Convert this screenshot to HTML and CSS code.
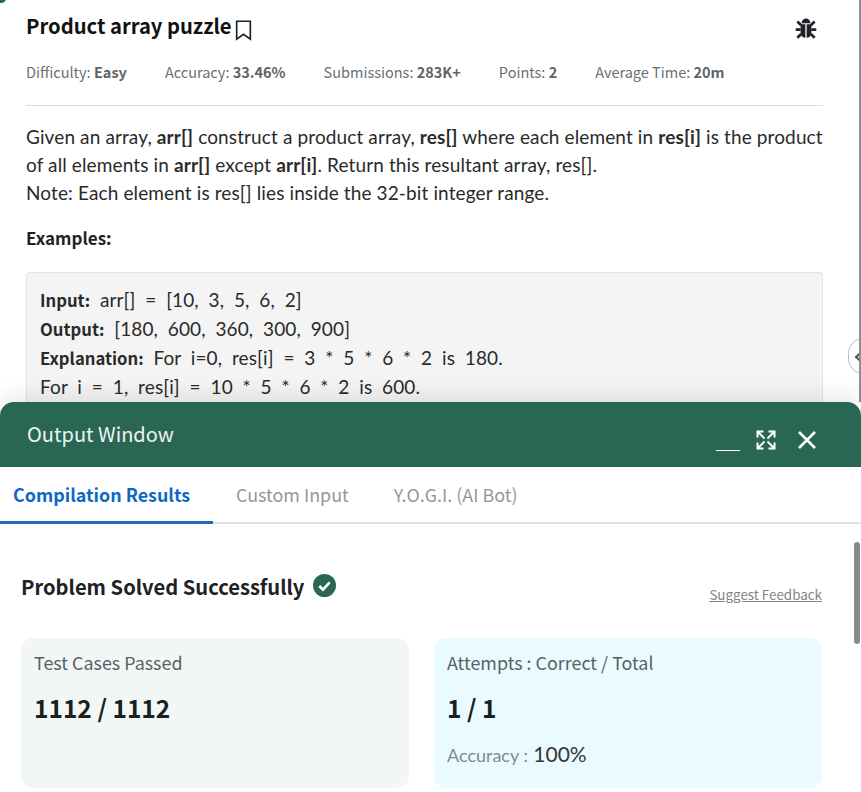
FILE: index.html
```html
<!DOCTYPE html>
<html lang="en">
<head>
<meta charset="utf-8">
<title>Product array puzzle</title>
<link rel="stylesheet" href="styles.css">
</head>
<body>
<main class="problem">
  <header class="title-row">
    <div class="title-group">
      <h1 class="title">Product array puzzle</h1>
      <svg class="bookmark" viewBox="0 0 16 20" aria-hidden="true"><path d="M1.500 1.200h13v17l-6.500-4.600-6.500 4.600z"/></svg>
    </div>
    <svg class="bug" viewBox="0 0 24 24" aria-hidden="true"><path d="M7.800 7.500c.4-2.800 2-4.300 4.200-4.300s3.800 1.500 4.200 4.300z"/><path d="M7 8.500h4.400V21C8.800 20.800 7 19 7 16.500zM12.600 8.500H17v8c0 2.500-1.800 4.300-4.400 4.500z"/><path class="bug-legs" d="M7.500 9.500 4 6M16.500 9.500 20 6M7 13.500H2.500M17 13.500h4.500M7.500 17.500 4 21M16.500 17.500 20 21"/></svg>
  </header>
  <div class="stats">
    <span>Difficulty: <b>Easy</b></span>
    <span>Accuracy: <b>33.46%</b></span>
    <span>Submissions: <b>283K+</b></span>
    <span>Points: <b>2</b></span>
    <span>Average Time: <b>20m</b></span>
  </div>
  <hr class="rule">
  <p class="statement">Given an array, <b>arr[]</b> construct a product array, <b>res[]</b> where each element in <b>res[i]</b> is the product of all elements in <b>arr[]</b> except <b>arr[i]</b>. Return this resultant array, res[].<br>Note: Each element is res[] lies inside the 32-bit integer range.</p>
  <h2 class="examples">Examples:</h2>
  <pre class="example"><b>Input:</b> arr[] = [10, 3, 5, 6, 2]
<b>Output:</b> [180, 600, 360, 300, 900]
<b>Explanation:</b> For i=0, res[i] = 3 * 5 * 6 * 2 is 180.
For i = 1, res[i] = 10 * 5 * 6 * 2 is 600.
For i = 2, res[i] = 10 * 3 * 6 * 2 is 360.</pre>
</main>
<div class="handle"><span class="handle-arrow"></span></div>
<div class="edge-line"></div>
<div class="corner-hint"></div>
<section class="output">
  <div class="output-bar">
    <span class="output-title">Output Window</span>
    <div class="output-actions">
      <span class="minimize"></span>
      <svg class="expand" viewBox="0 0 20 20" aria-hidden="true"><path d="M1.500 7.500v-6h6M1.500 1.500l7 7M18.500 7.500v-6h-6M18.500 1.500l-7 7M1.500 12.500v6h6M1.500 18.500l7-7M18.500 12.500v6h-6M18.500 18.500l-7-7"/></svg>
      <svg class="close" viewBox="0 0 20 20" aria-hidden="true"><path d="M2 2l16 16M18 2 2 18"/></svg>
    </div>
  </div>
  <nav class="tabs">
    <span class="tab active">Compilation Results</span>
    <span class="tab">Custom Input</span>
    <span class="tab">Y.O.G.I. (AI Bot)</span>
  </nav>
  <div class="results">
    <div class="result-head">
      <div class="solved">
        <h3>Problem Solved Successfully</h3>
        <svg class="check" viewBox="0 0 22 22" aria-hidden="true"><circle cx="11" cy="11" r="11"/><path d="M6 11.500l3.500 3.500 6.500-7"/></svg>
      </div>
      <a class="feedback">Suggest Feedback</a>
    </div>
    <div class="cards">
      <div class="card card-grey">
        <div class="card-label">Test Cases Passed</div>
        <div class="card-value">1112 / 1112</div>
      </div>
      <div class="card card-blue">
        <div class="card-label">Attempts : Correct / Total</div>
        <div class="card-value">1 / 1</div>
        <div class="card-accuracy"><span>Accuracy :</span> 100%</div>
      </div>
    </div>
  </div>
  <div class="scrollbar"></div>
</section>
</body>
</html>
```
FILE: styles.css
```css
* { box-sizing: border-box; }
html, body { margin: 0; height: 792px; overflow: hidden; background: #fff; }
body { position: relative; width: 861px; font-family: "Noto Sans CJK SC", "Liberation Sans", sans-serif; color: #1e2125; }
.problem { width: 849px; padding: 0 0 0 26px; }
.title-row { display: flex; justify-content: space-between; align-items: center; height: 56px; padding-right: 30px; }
.title-group { display: flex; align-items: center; gap: 3px; margin-bottom: 4px; }
.title { margin: 0; font-size: 20.200px; font-weight: 700; color: #111; line-height: 30px; }
.bookmark { width: 17px; height: 21px; margin-top: 8px; fill: none; stroke: #1e2125; stroke-width: 1.600; }
.bug { width: 26px; height: 26px; fill: #1e2125; }
.bug-legs { fill: none; stroke: #1e2125; stroke-width: 2.400; }
.stats { display: flex; gap: 38px; margin-top: 6px; font-size: 14.500px; line-height: 20px; color: #6a6f75; }
.stats b { font-weight: 700; color: #5f6469; }
.rule { width: 797px; margin: 23px 0 0; border: 0; border-top: 1px solid #dcdcdc; }
.statement { width: 797px; margin: 17px 0 0; font-family: Lato, sans-serif; font-size: 19px; letter-spacing: .12px; line-height: 28px; color: #2a2a2a; }
.statement b { font-weight: 700; }
.examples { margin: 19px 0 0; font-size: 17px; line-height: 24px; font-weight: 700; color: #1e2125; }
.example { width: 797px; height: 180px; margin: 22px 0 0; padding: 12px 13px; background: #f4f4f4; border: 1px solid #e3e3e3; border-radius: 3px; font-family: Lato, sans-serif; font-size: 19px; letter-spacing: .12px; line-height: 29px; color: #2a2a2a; word-spacing: 4.800px; white-space: pre-wrap; }
.example b { font-family: "Noto Sans CJK SC", sans-serif; font-size: 16.700px; line-height: 1; font-weight: 700; letter-spacing: 0; }
.handle { position: absolute; left: 848px; top: 338px; width: 30px; height: 36px; background: #fff; border: 1px solid #b9bdc1; border-radius: 18px; }
.handle-arrow { position: absolute; left: 7px; top: 15px; width: 6px; height: 6px; border-left: 2px solid #555; border-bottom: 2px solid #555; transform: rotate(45deg); }
.edge-line { position: absolute; left: 859px; top: 0; width: 2px; height: 402px; background: #8f8f8f; }
.corner-hint { position: absolute; left: -4px; top: -6px; width: 10px; height: 9px; background: #2a6654; border-radius: 50%; }
.output { position: absolute; left: 0; top: 402px; width: 861px; height: 390px; background: #fff; border-radius: 14px 14px 0 0; box-shadow: 0 -10px 18px rgba(0,0,0,.07); }
.output-bar { display: flex; justify-content: space-between; align-items: center; height: 65px; padding: 0 44px 0 27px; background: #2a6654; border-radius: 14px 14px 0 0; }
.output-title { margin-bottom: 2px; font-size: 20px; line-height: 30px; color: #edf5f2; }
.output-actions { display: flex; align-items: center; gap: 16px; margin-top: 11px; }
.minimize { width: 24px; height: 1px; margin-top: 20px; border-top: 1.500px solid #fff; }
.expand { width: 20px; height: 20px; fill: none; stroke: #fff; stroke-width: 2; }
.close { width: 20px; height: 20px; margin-left: 5px; fill: none; stroke: #fff; stroke-width: 2.500; }
.tabs { display: flex; height: 57px; border-bottom: 2px solid #e0e0e0; font-size: 17.900px; }
.tab { padding: 14px 0 0; margin-left: 45px; color: #93979b; }
.tab.active { width: 213px; margin: 0 -22px -2px 0; padding-left: 13px; color: #0e68c2; font-weight: 700; border-bottom: 3px solid #1e6cb8; }
.results { padding: 0 39px 0 21px; }
.result-head { display: flex; justify-content: space-between; align-items: center; height: 40px; margin-top: 42px; }
.solved { display: flex; align-items: center; gap: 9px; }
.solved h3 { margin: 0; font-size: 20.150px; font-weight: 700; color: #1e2125; }
.check { width: 23px; height: 23px; margin-top: -2px; }
.check circle { fill: #2a6654; }
.check path { fill: none; stroke: #fff; stroke-width: 2.500; }
.feedback { margin-top: 15px; font-size: 13.400px; color: #80858a; text-decoration: underline; }
.cards { display: grid; grid-template-columns: 388px 388px; gap: 25px; margin-top: 32px; }
.card { height: 150px; padding: 11px 13px; border-radius: 12px; }
.card-grey { background: #f2f7f6; }
.card-blue { background: #e9fbff; }
.card-label { font-size: 17.900px; line-height: 26px; color: #5a5f64; }
.card-value { margin-top: 16px; font-size: 24.500px; line-height: 34px; font-weight: 700; color: #1c1f22; }
.card-accuracy { margin-top: 15px; font-family: Lato, sans-serif; font-size: 21px; line-height: 28px; color: #33363a; }
.card-accuracy span { font-size: 18px; color: #85898d; }
.scrollbar { position: absolute; right: 1px; top: 140px; width: 6px; height: 102px; background: #8a8a8a; border-radius: 3px; }
```
